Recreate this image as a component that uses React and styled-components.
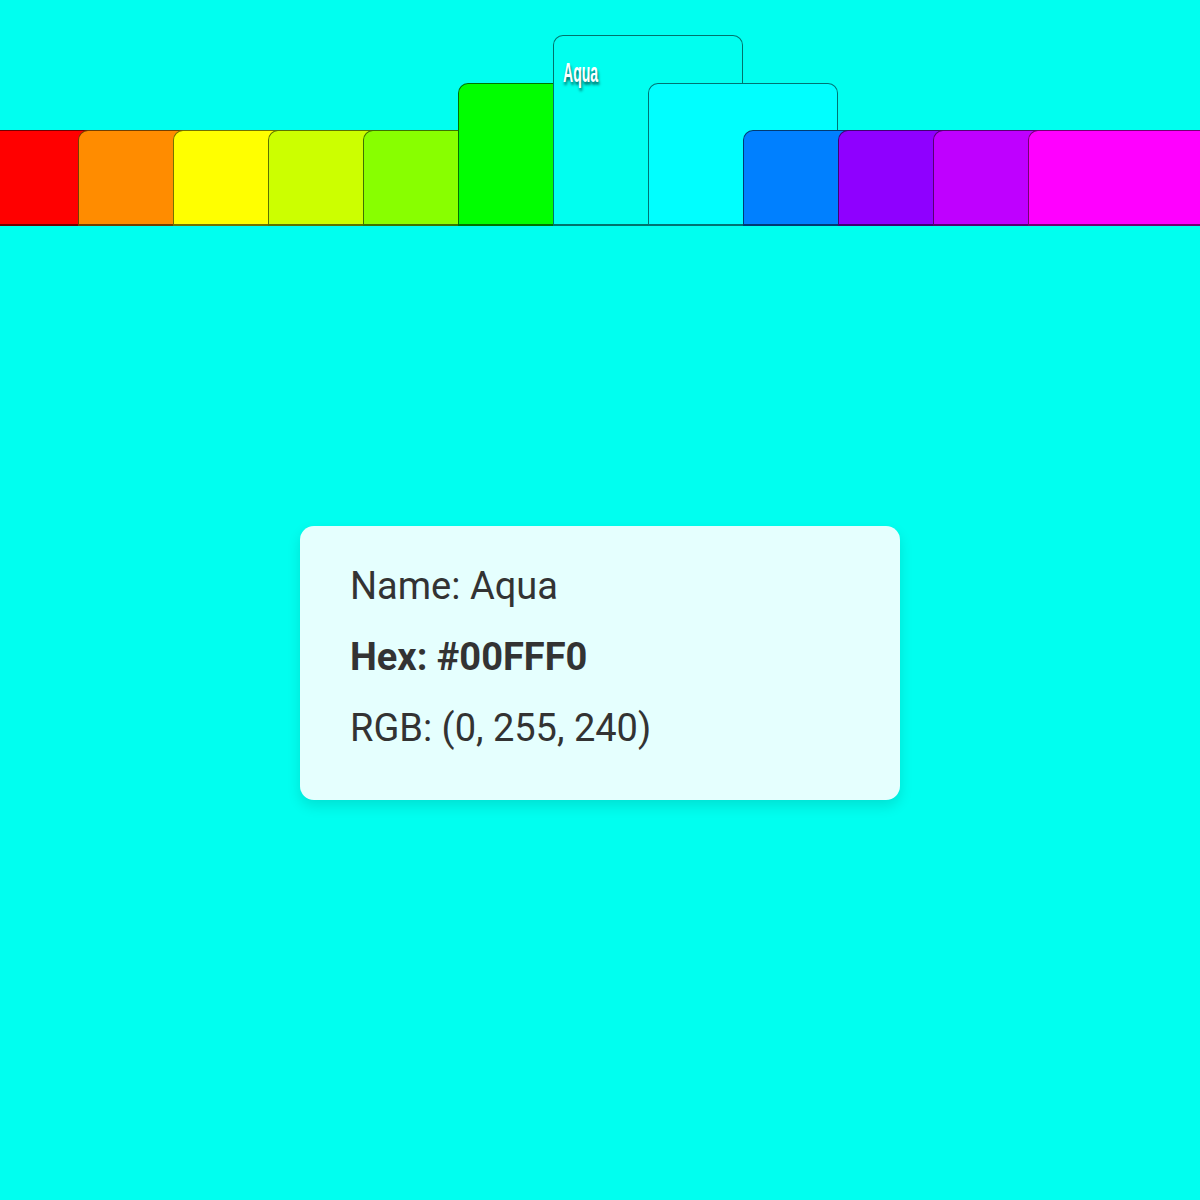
import React, { useState } from 'react';
import styled, { createGlobalStyle } from 'styled-components';

const COLORS = [
  { name: 'Red', hex: '#FF0000' },
  { name: 'Orange', hex: '#FF8C00' },
  { name: 'Yellow', hex: '#FFFF00' },
  { name: 'Lime', hex: '#CCFF00' },
  { name: 'Chartreuse', hex: '#88FF00' },
  { name: 'Green', hex: '#00FF00' },
  { name: 'Aqua', hex: '#00FFF0' },
  { name: 'Cyan', hex: '#00FFFF' },
  { name: 'Azure', hex: '#0080FF' },
  { name: 'Violet', hex: '#8F00FF' },
  { name: 'Purple', hex: '#BF00FF' },
  { name: 'Magenta', hex: '#FF00FF' },
];

const toRgb = hex => {
  const n = parseInt(hex.slice(1), 16);
  return [(n >> 16) & 255, (n >> 8) & 255, n & 255];
};

const GlobalStyle = createGlobalStyle`
  html, body {
    margin: 0;
    padding: 0;
  }
  body {
    font-family: Roboto, "Noto Sans", Arial, sans-serif;
    overflow: hidden;
  }
`;

const App = () => {
  const [active, setActive] = useState(6);
  const color = COLORS[active];
  const rgb = toRgb(color.hex);

  return (
    <>
      <GlobalStyle />
      <Page bg={color.hex}>
        <TabStrip>
          {COLORS.map((c, index) => {
            const distance = Math.abs(index - active);
            const level = distance === 0 ? 'active' : distance === 1 ? 'near' : 'rest';
            return (
              <Tab key={c.name} bg={c.hex} level={level} onClick={() => setActive(index)}>
                {level === 'active' && <TabLabel>{c.name}</TabLabel>}
              </Tab>
            );
          })}
        </TabStrip>
        <Card>
          <Line>Name: {color.name}</Line>
          <Line bold>Hex: {color.hex}</Line>
          <Line>
            RGB: ({rgb[0]}, {rgb[1]}, {rgb[2]})
          </Line>
        </Card>
      </Page>
    </>
  );
};

const Page = styled.div`
  width: 100%;
  min-height: 1200px;
  background: ${({ bg }) => bg};
  display: flex;
  flex-direction: column;
  align-items: center;
`;

const TabStrip = styled.div`
  width: 100%;
  height: 226px;
  display: flex;
  justify-content: center;
  align-items: flex-end;
`;

const TAB_HEIGHTS = { active: 191, near: 143, rest: 96 };

const Tab = styled.div`
  flex: 0 0 190px;
  height: ${({ level }) => TAB_HEIGHTS[level]}px;
  margin-right: -95px;
  box-sizing: border-box;
  background: ${({ bg }) => bg};
  border: 1px solid rgba(0, 0, 0, 0.55);
  border-bottom-width: 2px;
  border-radius: 10px 10px 0 0;
  padding: 22px 9px;
  cursor: pointer;

  &:last-child {
    margin-right: 0;
  }
`;

const TabLabel = styled.span`
  display: inline-block;
  font-family: "Liberation Sans", Arial, sans-serif;
  font-weight: 700;
  font-size: 27px;
  color: #fff;
  transform: scaleX(0.52);
  transform-origin: left center;
  text-shadow: 2px 3px 4px rgba(0, 0, 0, 0.6);
`;

const Card = styled.div`
  margin-top: 300px;
  width: 600px;
  height: 274px;
  box-sizing: border-box;
  padding: 25px 50px;
  background: #e5fffe;
  border-radius: 14px;
  box-shadow: 0 6px 14px rgba(0, 0, 0, 0.12);
`;

const Line = styled.p`
  margin: 0;
  font-size: 38px;
  line-height: 71px;
  color: #333;
  font-weight: ${({ bold }) => (bold ? 700 : 400)};
`;

export default App;
